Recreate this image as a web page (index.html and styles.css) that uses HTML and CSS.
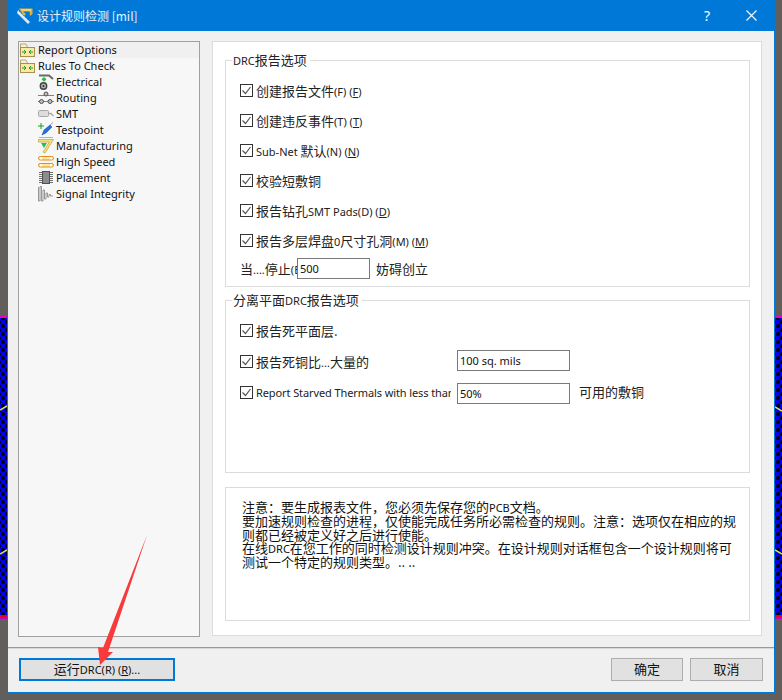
FILE: index.html
```html
<!DOCTYPE html>
<html lang="zh">
<head>
<meta charset="utf-8">
<title>设计规则检测</title>
<link rel="stylesheet" href="styles.css">
</head>
<body>
<svg class="strip strip-left" width="7" height="303" viewBox="0 0 7 303">
  <use href="#pcb"/>
  <path d="M0 94 L7 90 M0 238 L7 234" stroke="#e8e84a" stroke-width="1.5"/>
</svg>
<svg class="strip strip-right" width="7" height="303" viewBox="0 0 7 303">
  <defs>
    <pattern id="dots" width="8" height="8" patternUnits="userSpaceOnUse">
      <rect width="8" height="8" fill="#0000f5"/>
      <circle cx="3" cy="2" r="2" fill="#000"/>
      <circle cx="7" cy="6" r="2" fill="#000"/>
      <circle cx="-1" cy="6" r="2" fill="#000"/>
    </pattern>
    <g id="pcb">
      <rect width="7" height="299" fill="url(#dots)"/>
      <rect width="7" height="2" fill="#e800c8"/>
      <rect y="299" width="7" height="2" fill="#e0002c"/>
      <rect y="301" width="7" height="2" fill="#c000c8"/>
    </g>
  </defs>
  <use href="#pcb"/>
  <path d="M0 91 L7 95 M0 234 L7 238" stroke="#e8e84a" stroke-width="1.5"/>
</svg>

<div class="dialog">
  <header class="titlebar">
    <svg class="app-icon" width="16" height="16" viewBox="0 0 16 16">
      <path d="M2 0.500 H15.500 V6 L13 8 L12.500 3.500 H6 L9 6 L7 8 Z" fill="#e8b030"/>
      <path d="M4 1.500 H14 V2.500 H5 Z" fill="#fff0b0"/>
      <path d="M1 2 L13 14 L11 16 L0 5 Z" fill="#e4e8ec"/>
      <path d="M2 4 L3 3 M4 6 L5 5 M6 8 L7 7 M8 10 L9 9 M10 12 L11 11" stroke="#6a7078" stroke-width="0.7"/>
    </svg>
    <span class="title-text">设计规则检测 [mil]</span>
    <span class="help">?</span>
    <svg class="close" width="11" height="11" viewBox="0 0 11 11"><path d="M0.500 0.500 L10.500 10.500 M10.500 0.500 L0.500 10.500" stroke="#fff" stroke-width="1.100" fill="none"/></svg>
  </header>

  <div class="body">
    <nav class="tree">
      <div class="tree-row top selected">
        <svg class="ticon" width="16" height="14" viewBox="0 0 16 14"><path d="M0.500 4 V1 H6 L7.500 4" fill="#f6efd8" stroke="#b8a878"/><rect x="0.500" y="4.500" width="14" height="9" fill="#f8eaa4" stroke="#a89050"/><path d="M2 9 H6 M4 7 L6 9 L4 11 M13 9 H9 M11 7 L9 9 L11 11" stroke="#1f9a28" fill="none"/></svg>
        <span class="tree-text">Report Options</span>
      </div>
      <div class="tree-row top">
        <svg class="ticon" width="16" height="14" viewBox="0 0 16 14"><path d="M0.500 4 V1 H6 L7.500 4" fill="#f6efd8" stroke="#b8a878"/><rect x="0.500" y="4.500" width="14" height="9" fill="#f8eaa4" stroke="#a89050"/><path d="M2 9 H6 M4 7 L6 9 L4 11 M13 9 H9 M11 7 L9 9 L11 11" stroke="#1f9a28" fill="none"/></svg>
        <span class="tree-text">Rules To Check</span>
      </div>
      <div class="tree-row sub">
        <svg class="ticon" width="16" height="16" viewBox="0 0 16 16"><path d="M1 1.500 H11 L15 5" stroke="#6a6a6a" stroke-width="2" fill="none"/><rect x="4.500" y="3.500" width="3.500" height="3.500" fill="#20c040" transform="rotate(45 6 5)"/><circle cx="5.500" cy="12" r="3.200" fill="#b0b0b0" stroke="#404040" stroke-width="1.400"/><circle cx="5.500" cy="12" r="1" fill="#303030"/></svg>
        <span class="tree-text">Electrical</span>
      </div>
      <div class="tree-row sub">
        <svg class="ticon" width="16" height="16" viewBox="0 0 16 16"><path d="M0 5.500 H16 M0 11.500 H16" stroke="#808080"/><circle cx="8" cy="4" r="2" fill="#c0c0c0" stroke="#505050"/><circle cx="3.500" cy="11.500" r="2" fill="#c0c0c0" stroke="#505050"/><circle cx="12" cy="11.500" r="2" fill="#c0c0c0" stroke="#505050"/></svg>
        <span class="tree-text">Routing</span>
      </div>
      <div class="tree-row sub">
        <svg class="ticon" width="16" height="16" viewBox="0 0 16 16"><rect x="0.500" y="4.500" width="10" height="6" rx="1" fill="#dcdcdc" stroke="#a8a8a8"/><path d="M10 7.500 H13 L15.500 10" stroke="#a8a8a8" stroke-width="1.500" fill="none"/></svg>
        <span class="tree-text">SMT</span>
      </div>
      <div class="tree-row sub">
        <svg class="ticon" width="16" height="16" viewBox="0 0 16 16"><path d="M0 4 H6 M3 1 V7" stroke="#10a020"/><path d="M4 13 L6 8 L12 3 L14 5 L8 11 Z" fill="#2070e0" stroke="#1050a0" stroke-width="0.500"/><path d="M12 3 L15 0.500" stroke="#a0a0a0"/><path d="M1 15.500 H15" stroke="#b0b0b0"/></svg>
        <span class="tree-text">Testpoint</span>
      </div>
      <div class="tree-row sub">
        <svg class="ticon" width="16" height="16" viewBox="0 0 16 16"><path d="M0.500 1.500 H15.500 L7 15 L5 14 L11.500 4 H0.500 Z" fill="#f4e47a" stroke="#c8a840" stroke-width="0.800"/><path d="M3 5 H9 L6 10 Z" fill="#20c060"/></svg>
        <span class="tree-text">Manufacturing</span>
      </div>
      <div class="tree-row sub">
        <svg class="ticon" width="16" height="16" viewBox="0 0 16 16"><rect x="0.500" y="2.500" width="15" height="3.500" rx="1.700" fill="#f8e8a0" stroke="#e09020"/><rect x="0.500" y="9.500" width="15" height="3.500" rx="1.700" fill="#f8e8a0" stroke="#e09020"/><circle cx="3" cy="4.200" r="1.200" fill="#fff"/><circle cx="13" cy="4.200" r="1.200" fill="#fff"/><circle cx="3" cy="11.200" r="1.200" fill="#fff"/><circle cx="13" cy="11.200" r="1.200" fill="#fff"/></svg>
        <span class="tree-text">High Speed</span>
      </div>
      <div class="tree-row sub">
        <svg class="ticon" width="16" height="16" viewBox="0 0 16 16"><rect x="4.500" y="1.500" width="7" height="12" fill="#8c8c8c" stroke="#505050"/><path d="M1 2.500 H4 M1 4.500 H4 M1 6.500 H4 M1 8.500 H4 M1 10.500 H4 M1 12.500 H4 M12 2.500 H15 M12 4.500 H15 M12 6.500 H15 M12 8.500 H15 M12 10.500 H15 M12 12.500 H15" stroke="#707070"/></svg>
        <span class="tree-text">Placement</span>
      </div>
      <div class="tree-row sub">
        <svg class="ticon" width="16" height="16" viewBox="0 0 16 16"><path d="M0.500 1 V15 H2 V0.500 H3.500 V15 H5 V4 H6.500 V13 H8 V7 H9.500 V11 H11 V8.500 H12.500 V10 H15" stroke="#808080" fill="none" stroke-width="0.800"/></svg>
        <span class="tree-text">Signal Integrity</span>
      </div>
    </nav>

    <main class="panel">
      <fieldset class="group group-a">
        <legend class="legend"><span class="lt">DRC</span>报告选项</legend>
        <label class="check-row"><input type="checkbox" class="box" checked><span class="cap">创建报告文件<span class="lt">(F) (<u>F</u>)</span></span></label>
        <label class="check-row"><input type="checkbox" class="box" checked><span class="cap">创建违反事件<span class="lt">(T) (<u>T</u>)</span></span></label>
        <label class="check-row"><input type="checkbox" class="box" checked><span class="cap"><span class="lt">Sub-Net </span>默认<span class="lt">(N) (<u>N</u>)</span></span></label>
        <label class="check-row"><input type="checkbox" class="box" checked><span class="cap">校验短敷铜</span></label>
        <label class="check-row"><input type="checkbox" class="box" checked><span class="cap">报告钻孔<span class="lt">SMT Pads(D) (<u>D</u>)</span></span></label>
        <label class="check-row"><input type="checkbox" class="box" checked><span class="cap">报告多层焊盘<span class="lt">0</span>尺寸孔洞<span class="lt">(M) (<u>M</u>)</span></span></label>
        <div class="stop-row">
          <span class="clip stop-label">当<span class="lt">....</span>停止<span class="lt">(E</span></span>
          <input class="field stop-field" type="text" value="500">
          <span class="cap">妨碍创立</span>
        </div>
      </fieldset>

      <fieldset class="group group-b">
        <legend class="legend">分离平面<span class="lt">DRC</span>报告选项</legend>
        <label class="check-row b-first"><input type="checkbox" class="box" checked><span class="cap">报告死平面层.</span></label>
        <div class="b-row">
          <label class="b-label b-label-low"><input type="checkbox" class="box" checked><span class="cap">报告死铜比<span class="lt">...</span>大量的</span></label>
          <input class="field wide-field" type="text" value="100 sq. mils">
        </div>
        <div class="b-row">
          <label class="b-label b-label-high"><input type="checkbox" class="box" checked><span class="cap clip lt starve">Report Starved Thermals with less than</span></label>
          <input class="field wide-field" type="text" value="50%">
          <span class="cap after">可用的敷铜</span>
        </div>
      </fieldset>

      <section class="notes">注意：要生成报表文件，您必须先保存您的<span class="lt">PCB</span>文档。<br>要加速规则检查的进程，仅使能完成任务所必需检查的规则。注意：选项仅在相应的规<br>则都已经被定义好之后进行使能。<br>在线<span class="lt">DRC</span>在您工作的同时检测设计规则冲突。在设计规则对话框包含一个设计规则将可<br>测试一个特定的规则类型。.. ..</section>
    </main>
  </div>

  <footer class="footer">
    <button class="btn run" type="button">运行<span class="lt">DRC(R) (<u>R</u>)...</span></button>
    <div class="footer-right">
      <button class="btn ok" type="button">确定</button>
      <button class="btn cancel" type="button">取消</button>
    </div>
  </footer>
</div>

<svg class="arrow" width="60" height="135" viewBox="0 0 60 135">
  <path d="M54 0 L10 113 L5 112 L7 130 L20 117 L15 117 Z" fill="#f93a3a"/>
</svg>
</body>
</html>
```
FILE: styles.css
```css
* { box-sizing: border-box; }
html, body { margin: 0; height: 100%; }
body {
  background: #625e5b;
  font-family: "Noto Sans CJK SC", "Noto Sans", sans-serif;
  font-size: 13px;
  color: #111;
  overflow: hidden;
  position: relative;
  width: 782px;
  height: 700px;
}
.strip { position: absolute; top: 316px; display: block; }
.strip-left { left: 0; }
.strip-right { left: 775px; }

.dialog {
  position: absolute;
  left: 7px;
  top: 0;
  width: 768px;
  height: 693px;
  background: #f0f0f0;
  border: 1px solid #0078d7;
  border-top: 0;
  display: flex;
  flex-direction: column;
}
.titlebar {
  height: 31px;
  flex: none;
  background: #0078d7;
  color: #fff;
  display: flex;
  align-items: center;
  padding-left: 9px;
}
.app-icon { flex: none; }
.title-text { margin-left: 4px; font-size: 12px; color: #e6f2fb; }
.help { margin-left: auto; font-family: "Noto Sans", sans-serif; font-size: 14px; margin-right: 36px; }
.close { margin-right: 17px; }

.body {
  display: flex;
  gap: 12px;
  padding: 10px 12px 0 10px;
  height: 605px;
  flex: none;
}
.tree {
  width: 182px;
  height: 596px;
  background: #f7f7f7;
  border: 1px solid #a0a0a0;
  font-family: "Noto Sans", sans-serif;
  font-size: 11px;
  flex: none;
}
.tree-row { height: 16px; display: flex; align-items: center; color: #111; }
.tree-row.top { padding-left: 1px; }
.tree-row.sub { padding-left: 19px; }
.tree-row.selected { background: #f0f0f0; }
.tree-text { padding-bottom: 1px; }
.ticon { flex: none; margin-right: 2px; }

.panel {
  width: 550px;
  height: 595px;
  flex: none;
  background: #fff;
  border: 1px solid #dcdcdc;
  padding: 10px 11px 0 12px;
  display: flex;
  flex-direction: column;
}
.group {
  margin: 0;
  border: 1px solid #dcdcdc;
  padding: 0 0 0 14px;
  min-width: 0;
  flex: none;
}
.group-a { height: 235px; }
.group-b { height: 181px; margin-top: 5px; }
.legend {
  margin-left: -8px;
  padding: 0 3px 0 1px;
  font-size: 13px;
  line-height: 16px;
  height: 16px;
  color: #222;
}
.lt { font-family: "Noto Sans", sans-serif; font-size: 11px; }
.check-row {
  height: 30px;
  display: flex;
  align-items: center;
}
.group-a .check-row:first-of-type { margin-top: 7px; }
.b-first { margin-top: 7px; margin-bottom: -1px; }
.box {
  appearance: none;
  -webkit-appearance: none;
  margin: 0 3px 0 0;
  width: 13px;
  height: 13px;
  flex: none;
  border: 1px solid #333;
  background: #fff url("data:image/svg+xml,%3Csvg xmlns='http://www.w3.org/2000/svg' width='11' height='11'%3E%3Cpath d='M1.500 5.500 L4.500 8.500 L9.500 2' fill='none' stroke='%23555' stroke-width='1.200'/%3E%3C/svg%3E") no-repeat center;
}
.cap { white-space: nowrap; color: #222; }
.clip { overflow: hidden; white-space: nowrap; display: block; }
.stop-row { display: flex; align-items: center; height: 22px; margin-top: 2px; }
.stop-label { width: 57px; margin-left: 0; color: #222; }
.field {
  height: 21px;
  border: 1px solid #7a7a7a;
  background: #fff;
  font-family: "Noto Sans", sans-serif;
  font-size: 11px;
  padding: 0 2px;
  color: #111;
  flex: none;
  margin: 0;
  outline: 0;
  border-radius: 0;
}
.stop-field { width: 73px; margin-right: 6px; }
.b-row { display: flex; align-items: center; height: 33px; }
.b-label { display: flex; align-items: center; width: 217px; flex: none; overflow: hidden; }
.b-label-low { margin-top: 1px; }
.b-label-high { margin-top: -3px; }
.starve { width: 195px; font-size: 11px; letter-spacing: -0.100px; }
.wide-field { width: 113px; }
.after { margin-left: 9px; margin-top: -5px; }
.notes {
  margin-top: 14px;
  height: 134px;
  flex: none;
  border: 1px solid #dcdcdc;
  padding: 12px 0 0 16px;
  font-size: 13px;
  line-height: 13.300px;
  color: #111;
  white-space: nowrap;
}

.footer {
  flex: 1;
  border-top: 1px solid #9a9a9a;
  box-shadow: inset 0 1px 0 #d8d8d8;
  margin-top: 11px;
  display: flex;
  align-items: flex-start;
  padding: 10px 11px 0 11px;
  justify-content: space-between;
}
.footer-right { display: flex; gap: 7px; }
.btn {
  height: 23px;
  background: #e1e1e1;
  border: 1px solid #adadad;
  font-family: "Noto Sans CJK SC", sans-serif;
  font-size: 13px;
  color: #111;
  padding: 0 0 2px;
  margin: 0;
  line-height: 1;
}
.run { width: 156px; border: 2px solid #0078d7; }
.ok { width: 72px; }
.cancel { width: 73px; }

.arrow { position: absolute; left: 93px; top: 535px; display: block; }
```
